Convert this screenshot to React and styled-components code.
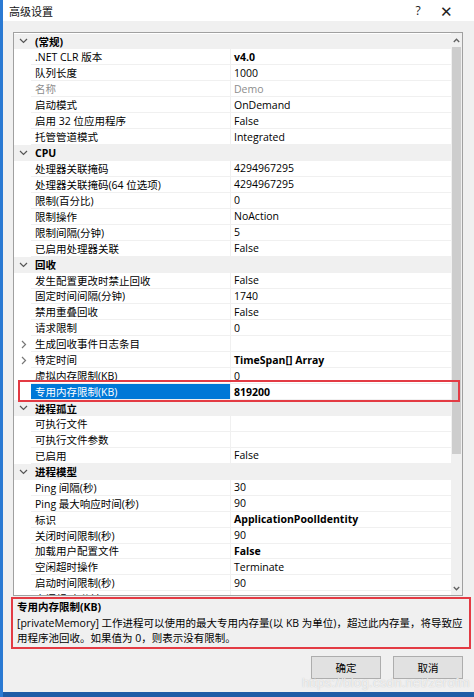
import React from "react";
import styled, { createGlobalStyle } from "styled-components";

const GlobalStyle = createGlobalStyle`
  html, body { margin: 0; padding: 0; }
  body {
    font-family: "Open Sans", "Noto Sans CJK SC", sans-serif;
    font-size: 10.5px;
    color: #000;
  }
`;

const ROW_H = 15.95;

const sections = [
  {
    title: "(常规)",
    rows: [
      { name: ".NET CLR 版本", value: "v4.0", bold: true },
      { name: "队列长度", value: "1000" },
      { name: "名称", value: "Demo", disabled: true },
      { name: "启动模式", value: "OnDemand" },
      { name: "启用 32 位应用程序", value: "False" },
      { name: "托管管道模式", value: "Integrated" },
    ],
  },
  {
    title: "CPU",
    rows: [
      { name: "处理器关联掩码", value: "4294967295" },
      { name: "处理器关联掩码(64 位选项)", value: "4294967295" },
      { name: "限制(百分比)", value: "0" },
      { name: "限制操作", value: "NoAction" },
      { name: "限制间隔(分钟)", value: "5" },
      { name: "已启用处理器关联", value: "False" },
    ],
  },
  {
    title: "回收",
    rows: [
      { name: "发生配置更改时禁止回收", value: "False" },
      { name: "固定时间间隔(分钟)", value: "1740" },
      { name: "禁用重叠回收", value: "False" },
      { name: "请求限制", value: "0" },
      { name: "生成回收事件日志条目", value: "", collapsed: true },
      { name: "特定时间", value: "TimeSpan[] Array", bold: true, collapsed: true },
      { name: "虚拟内存限制(KB)", value: "0" },
      { name: "专用内存限制(KB)", value: "819200", bold: true, selected: true },
    ],
  },
  {
    title: "进程孤立",
    rows: [
      { name: "可执行文件", value: "" },
      { name: "可执行文件参数", value: "" },
      { name: "已启用", value: "False" },
    ],
  },
  {
    title: "进程模型",
    rows: [
      { name: "Ping 间隔(秒)", value: "30" },
      { name: "Ping 最大响应时间(秒)", value: "90" },
      { name: "标识", value: "ApplicationPoolIdentity", bold: true },
      { name: "关闭时间限制(秒)", value: "90" },
      { name: "加载用户配置文件", value: "False", bold: true },
      { name: "空闲超时操作", value: "Terminate" },
      { name: "启动时间限制(秒)", value: "90" },
      { name: "空闲超时(分钟)", value: "20" },
    ],
  },
];

const Window = styled.div`
  position: relative;
  width: 474px;
  height: 697px;
  box-sizing: border-box;
  border-left: 3px solid #2b7ad3;
  background: #f0f0f0;
  display: flex;
  flex-direction: column;
  overflow: hidden;
`;

const TitleBar = styled.div`
  height: 21px;
  background: #fff;
  display: flex;
  align-items: center;
  padding: 0 10px 0 6px;
  font-size: 11px;
  color: #111;
`;

const Title = styled.span`
  flex: 1;
`;

const TitleButton = styled.span`
  width: ${(p) => p.$w}px;
  text-align: center;
  font-size: ${(p) => p.$size}px;
  color: #222;
`;

const Body = styled.div`
  flex: 1;
  display: flex;
  flex-direction: column;
  padding: 11px 11px 0 10px;
`;

const Grid = styled.div`
  height: 564px;
  box-sizing: border-box;
  border: 1px solid #a0a0a0;
  background: #fff;
  display: flex;
  overflow: hidden;
`;

const RowList = styled.div`
  flex: 1;
  display: flex;
  flex-direction: column;
  padding-top: 0.5px;
`;

const Row = styled.div`
  position: relative;
  flex: 0 0 ${ROW_H}px;
  height: ${ROW_H}px;
  display: flex;
  align-items: stretch;
  background: ${(p) => (p.$category ? "#f0f0f0" : "#fff")};

  ${(p) =>
    p.$marked &&
    `
    &::after {
      content: "";
      position: absolute;
      left: 4px;
      right: -9px;
      top: -4px;
      bottom: -2px;
      border: 2px solid #e33b44;
      z-index: 2;
      pointer-events: none;
    }
  `}
`;

const Gutter = styled.div`
  width: 17px;
  flex: 0 0 17px;
  display: flex;
  align-items: center;
  justify-content: center;
  padding-left: 2px;
  box-sizing: border-box;
`;

const CategoryLabel = styled.div`
  flex: 1;
  display: flex;
  align-items: center;
  padding-left: 4px;
  font-weight: 700;
`;

const NameCell = styled.div`
  width: 200px;
  flex: 0 0 200px;
  box-sizing: border-box;
  display: flex;
  align-items: center;
  padding-left: 4px;
  border-bottom: 1px solid #f0f0f0;
  border-right: 1px solid #f0f0f0;
  white-space: nowrap;
  background: ${(p) => (p.$selected ? "#0078d7" : "transparent")};
  color: ${(p) => (p.$selected ? "#fff" : p.$disabled ? "#8d8d8d" : "#000")};
`;

const ValueCell = styled.div`
  flex: 1;
  display: flex;
  align-items: center;
  padding-left: 3px;
  border-bottom: 1px solid #f0f0f0;
  white-space: nowrap;
  font-weight: ${(p) => (p.$bold ? 700 : 400)};
  color: ${(p) => (p.$disabled ? "#8d8d8d" : "#000")};
`;

const ScrollBar = styled.div`
  width: 11px;
  flex: 0 0 11px;
  background: #f0f0f0;
  display: flex;
  flex-direction: column;
  align-items: center;
`;

const ScrollArrow = styled.div`
  height: 14px;
  flex: 0 0 14px;
  display: flex;
  align-items: center;
  justify-content: center;
`;

const ScrollTrack = styled.div`
  flex: 1;
  width: 100%;
  display: flex;
  flex-direction: column;
  align-items: center;
`;

const ScrollThumb = styled.div`
  width: 9px;
  height: 407px;
  background: #cdcdcd;
`;

const Description = styled.div`
  margin: 1px -8px 0 -2px;
  height: 52px;
  box-sizing: border-box;
  border: 2px solid #e33b44;
  background: #f0f0f0;
  padding: 1px 4px 0 4px;
  line-height: 15.5px;
`;

const DescTitle = styled.div`
  font-weight: 700;
`;

const DescText = styled.div`
  white-space: nowrap;
`;

const Buttons = styled.div`
  display: flex;
  justify-content: flex-end;
  gap: 12px;
  margin-top: 7px;
`;

const Button = styled.button`
  width: 70px;
  height: 23px;
  border: 1px solid #adadad;
  background: #e1e1e1;
  font-family: inherit;
  font-size: 10.5px;
  color: #000;
  padding: 0;
`;

const Watermark = styled.div`
  position: absolute;
  right: 4px;
  bottom: 7px;
  font-family: "Liberation Sans", sans-serif;
  font-size: 13px;
  color: rgba(255, 255, 255, 0.75);
  text-shadow: 0 0 1px rgba(150, 150, 150, 0.6);
  letter-spacing: 0.3px;
`;

const BottomBar = styled.div`
  height: 5px;
  background: #1f5ca6;
  margin-left: -3px;
`;

const Chevron = ({ dir }) =>
  dir === "down" ? (
    <svg width="9" height="6" viewBox="0 0 9 6">
      <polyline points="1,1 4.5,4.5 8,1" fill="none" stroke="#555" strokeWidth="1.2" />
    </svg>
  ) : (
    <svg width="6" height="9" viewBox="0 0 6 9">
      <polyline points="1,1 4.5,4.5 1,8" fill="none" stroke="#777" strokeWidth="1.2" />
    </svg>
  );

const SmallArrow = ({ up }) => (
  <svg width="7" height="5" viewBox="0 0 7 5">
    <polyline
      points={up ? "0.8,4 3.5,1.2 6.2,4" : "0.8,1 3.5,3.8 6.2,1"}
      fill="none"
      stroke="#606060"
      strokeWidth="1.3"
    />
  </svg>
);

export default function App() {
  return (
    <>
      <GlobalStyle />
      <Window>
        <TitleBar>
          <Title>高级设置</Title>
          <TitleButton $w={20} $size={12}>?</TitleButton>
          <TitleButton $w={36} $size={15}>✕</TitleButton>
        </TitleBar>
        <Body>
          <Grid>
            <RowList>
              {sections.map((section) => (
                <React.Fragment key={section.title}>
                  <Row $category>
                    <Gutter>
                      <Chevron dir="down" />
                    </Gutter>
                    <CategoryLabel>{section.title}</CategoryLabel>
                  </Row>
                  {section.rows.map((row) => (
                    <Row key={row.name} $marked={row.selected}>
                      <Gutter>{row.collapsed && <Chevron dir="right" />}</Gutter>
                      <NameCell $selected={row.selected} $disabled={row.disabled}>
                        {row.name}
                      </NameCell>
                      <ValueCell $bold={row.bold} $disabled={row.disabled}>
                        {row.value}
                      </ValueCell>
                    </Row>
                  ))}
                </React.Fragment>
              ))}
            </RowList>
            <ScrollBar>
              <ScrollArrow>
                <SmallArrow up />
              </ScrollArrow>
              <ScrollTrack>
                <ScrollThumb />
              </ScrollTrack>
              <ScrollArrow>
                <SmallArrow />
              </ScrollArrow>
            </ScrollBar>
          </Grid>
          <Description>
            <DescTitle>专用内存限制(KB)</DescTitle>
            <DescText>
              [privateMemory] 工作进程可以使用的最大专用内存量(以 KB 为单位)，超过此内存量，将导致应
            </DescText>
            <DescText>用程序池回收。如果值为 0，则表示没有限制。</DescText>
          </Description>
          <Buttons>
            <Button>确定</Button>
            <Button>取消</Button>
          </Buttons>
        </Body>
        <Watermark>https://blog.csdn.net/zerofm</Watermark>
        <BottomBar />
      </Window>
    </>
  );
}
